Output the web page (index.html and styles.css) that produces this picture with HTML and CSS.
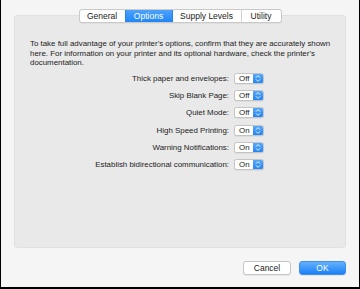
FILE: index.html
```html
<!DOCTYPE html>
<html>
<head>
<meta charset="utf-8">
<link rel="stylesheet" href="styles.css">
</head>
<body>
<div class="window">
  <div class="tabs">
    <div class="tab">General</div>
    <div class="tab sel">Options</div>
    <div class="tab">Supply Levels</div>
    <div class="tab">Utility</div>
  </div>
  <div class="panel">
    <p class="intro">To take full advantage of your printer's options, confirm that they are accurately shown here. For information on your printer and its optional hardware, check the printer's documentation.</p>
    <div class="opts">
      <div class="label">Thick paper and envelopes:</div>
      <div class="popup"><span class="val">Off</span><span class="arrows"><svg viewBox="0 0 10 11" width="10" height="11"><path d="M3.2 4.4 L5 2.6 L6.8 4.4 M3.2 6.6 L5 8.4 L6.8 6.6" fill="none" stroke="#fff" stroke-width="0.9" stroke-linecap="round" stroke-linejoin="round"/></svg></span></div>
      <div class="label">Skip Blank Page:</div>
      <div class="popup"><span class="val">Off</span><span class="arrows"><svg viewBox="0 0 10 11" width="10" height="11"><path d="M3.2 4.4 L5 2.6 L6.8 4.4 M3.2 6.6 L5 8.4 L6.8 6.6" fill="none" stroke="#fff" stroke-width="0.9" stroke-linecap="round" stroke-linejoin="round"/></svg></span></div>
      <div class="label">Quiet Mode:</div>
      <div class="popup"><span class="val">Off</span><span class="arrows"><svg viewBox="0 0 10 11" width="10" height="11"><path d="M3.2 4.4 L5 2.6 L6.8 4.4 M3.2 6.6 L5 8.4 L6.8 6.6" fill="none" stroke="#fff" stroke-width="0.9" stroke-linecap="round" stroke-linejoin="round"/></svg></span></div>
      <div class="label">High Speed Printing:</div>
      <div class="popup"><span class="val">On</span><span class="arrows"><svg viewBox="0 0 10 11" width="10" height="11"><path d="M3.2 4.4 L5 2.6 L6.8 4.4 M3.2 6.6 L5 8.4 L6.8 6.6" fill="none" stroke="#fff" stroke-width="0.9" stroke-linecap="round" stroke-linejoin="round"/></svg></span></div>
      <div class="label">Warning Notifications:</div>
      <div class="popup"><span class="val">On</span><span class="arrows"><svg viewBox="0 0 10 11" width="10" height="11"><path d="M3.2 4.4 L5 2.6 L6.8 4.4 M3.2 6.6 L5 8.4 L6.8 6.6" fill="none" stroke="#fff" stroke-width="0.9" stroke-linecap="round" stroke-linejoin="round"/></svg></span></div>
      <div class="label">Establish bidirectional communication:</div>
      <div class="popup"><span class="val">On</span><span class="arrows"><svg viewBox="0 0 10 11" width="10" height="11"><path d="M3.2 4.4 L5 2.6 L6.8 4.4 M3.2 6.6 L5 8.4 L6.8 6.6" fill="none" stroke="#fff" stroke-width="0.9" stroke-linecap="round" stroke-linejoin="round"/></svg></span></div>
    </div>
  </div>
  <div class="buttons">
    <div class="btn">Cancel</div>
    <div class="btn ok">OK</div>
  </div>
</div>
</body>
</html>
```
FILE: styles.css
```css
html, body {
  margin: 0;
  padding: 0;
}
body {
  width: 360px;
  height: 289px;
  overflow: hidden;
  font-family: "Liberation Sans", Arial, sans-serif;
  color: #222;
}
.window {
  box-sizing: border-box;
  width: 360px;
  height: 289px;
  background: #f5f5f5;
  border-left: 1px solid #000;
  border-right: 1px solid #000;
  border-bottom: 2px solid #000;
  padding: 9px 13px 0 13px;
  display: flex;
  flex-direction: column;
}
.tabs {
  align-self: center;
  display: flex;
  height: 14px;
  margin-bottom: -8px;
  position: relative;
  z-index: 1;
  background: #fff;
  border: 1px solid #c9c9c9;
  border-radius: 3px;
  box-sizing: border-box;
  box-shadow: 0 0.5px 0.5px rgba(0,0,0,0.08);
  font-size: 8.5px;
}
.tab {
  display: flex;
  align-items: center;
  justify-content: center;
  border-left: 1px solid #d4d4d4;
  color: #222;
}
.tab:first-child { border-left: none; width: 45px; }
.tab:nth-child(2) { width: 46px; }
.tab:nth-child(3) { width: 68px; }
.tab:nth-child(4) { width: 39px; }
.tab.sel {
  background: linear-gradient(#4da2fb, #1f86f6);
  color: #fff;
  border-left-color: #2a86ef;
}
.tab.sel + .tab { border-left-color: #2a86ef; }
.panel {
  box-sizing: border-box;
  height: 233px;
  background: #e9e9e9;
  border: 1px solid #e1e1e1;
  border-radius: 3px;
  padding: 23px 15px 0 15px;
}
.intro {
  margin: 0;
  font-size: 7.9px;
  line-height: 9.6px;
  color: #222;
  width: 302px;
}
.opts {
  margin-top: 5px;
  display: grid;
  grid-template-columns: 199px 30px;
  column-gap: 5px;
  row-gap: 6.3px;
  align-items: center;
  font-size: 7.9px;
}
.label {
  text-align: right;
  white-space: nowrap;
}
.popup {
  display: flex;
  height: 11px;
  box-sizing: border-box;
  border: 0.5px solid #c4c4c4;
  border-radius: 2.5px;
  background: #fff;
  overflow: hidden;
  box-shadow: 0 0.5px 0.5px rgba(0,0,0,0.1);
}
.val {
  flex: 1;
  display: flex;
  align-items: center;
  padding-left: 4px;
  font-size: 7.9px;
}
.arrows {
  width: 10px;
  background: linear-gradient(#55a7fb, #2385f6);
  display: flex;
  align-items: center;
  justify-content: center;
}
.arrows svg { display: block; }
.buttons {
  display: flex;
  justify-content: flex-end;
  gap: 8px;
  margin-top: 13px;
}
.btn {
  box-sizing: border-box;
  height: 14px;
  width: 48px;
  display: flex;
  align-items: center;
  justify-content: center;
  font-size: 8.5px;
  background: #fff;
  border: 0.5px solid #c6c6c6;
  border-radius: 3px;
  box-shadow: 0 0.5px 0.5px rgba(0,0,0,0.12);
  color: #222;
}
.btn.ok {
  width: 47px;
  color: #fff;
  background: linear-gradient(#65b0fb, #1b80f7);
  border-color: #3f8ff0;
}
```
